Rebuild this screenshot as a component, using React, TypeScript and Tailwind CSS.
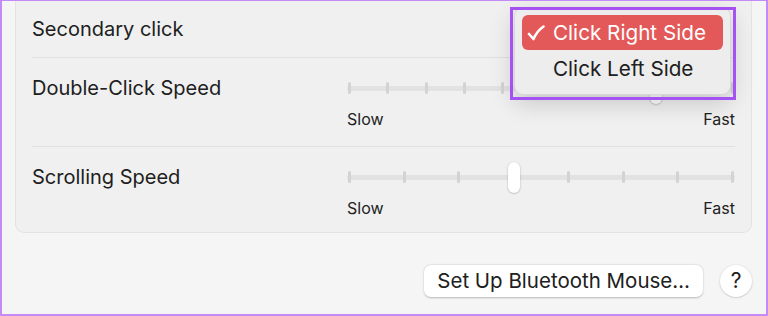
import React from "react";

const font = { fontFamily: "Inter, 'Noto Sans', sans-serif" };

function Slider({ ticks, value }: { ticks: number; value: number }) {
  const pct = (value / (ticks - 1)) * 100;
  return (
    <div className="w-[388px]">
      <div className="relative h-[24px]">
        <div className="absolute left-0 right-0 top-[9.5px] h-[5px] rounded-full bg-[#e2e2e2]" />
        <div className="absolute left-[1px] right-[1px] top-[6px] flex justify-between">
          {Array.from({ length: ticks }).map((_, i) => (
            <div key={i} className="h-[12px] w-[3px] rounded-full bg-[#d3d3d3]" />
          ))}
        </div>
        <div className="absolute left-[2.5px] right-[2.5px] top-[-3px] h-[31px]">
          <div
            className="absolute top-0 h-[31px] w-[12px] -translate-x-1/2 rounded-full bg-white shadow-[0_0.5px_2px_rgba(0,0,0,0.3)]"
            style={{ left: `${pct}%` }}
          />
        </div>
      </div>
      <div className="mt-[10px] flex justify-between text-[16px] leading-[18px] text-[#222]">
        <span>Slow</span>
        <span>Fast</span>
      </div>
    </div>
  );
}

export default function App() {
  return (
    <div
      className="relative h-[316px] w-[768px] overflow-hidden border-x-2 border-b-2 border-t border-[#c48bf6] bg-[#f5f5f5]"
      style={font}
    >
      <div className="ml-[13px] mr-[14px] rounded-b-[9px] border-x border-b border-[#e3e3e3] bg-[#f0f0f0] px-[16px]">
        <div className="flex h-[57px] items-center border-b border-[#e0e0e0]">
          <span className="text-[20px] leading-[24px] text-[#202020]">Secondary click</span>
        </div>
        <div className="flex items-start justify-between border-b border-[#e0e0e0] pb-[18px] pt-[18px]">
          <span className="text-[20px] leading-[24px] text-[#202020]">Double-Click Speed</span>
          <Slider ticks={11} value={8} />
        </div>
        <div className="flex items-start justify-between pb-[15px] pt-[18px]">
          <span className="text-[20px] leading-[24px] text-[#202020]">Scrolling Speed</span>
          <Slider ticks={8} value={3} />
        </div>
      </div>

      <div className="mr-[14px] mt-[32px] flex items-center justify-end gap-[17px]">
        <button className="h-[32px] rounded-[7px] bg-white px-[13px] text-[20.5px] leading-[24px] text-[#202020] shadow-[0_0.5px_2px_rgba(0,0,0,0.25)]">
          Set Up Bluetooth Mouse…
        </button>
        <button className="flex h-[32px] w-[32px] items-center justify-center rounded-full bg-white text-[21px] text-[#202020] shadow-[0_0.5px_2px_rgba(0,0,0,0.25)]">
          ?
        </button>
      </div>

      {/* popup menu */}
      <div className="absolute left-[512px] top-[6px] w-[217px] rounded-[9px] border border-[#d8d8d8] bg-[#ededed] p-[7px] shadow-[0_8px_24px_rgba(0,0,0,0.18)]">
        <div className="flex h-[35px] items-center rounded-[6px] bg-[#e35858] pl-[5px] text-[20.7px] leading-[24px] text-white">
          <svg width="18" height="16" viewBox="0 0 18 16" className="mr-[8px]" fill="none">
            <path d="M2 9 L6.5 14 Q10 6 16.5 1.5" stroke="white" strokeWidth="2.6" strokeLinecap="round" strokeLinejoin="round" />
          </svg>
          <span>Click Right Side</span>
        </div>
        <div className="flex h-[37px] items-center pl-[31px] text-[20.7px] leading-[24px] text-[#202020]">
          Click Left Side
        </div>
      </div>
      <div className="pointer-events-none absolute left-[508px] top-[6px] h-[93px] w-[226px] border-[3px] border-[#a452f2]" />
    </div>
  );
}
